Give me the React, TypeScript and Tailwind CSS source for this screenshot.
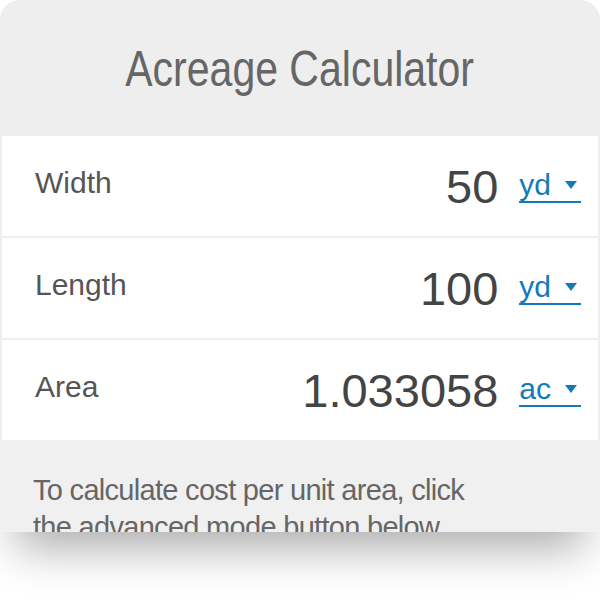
const rows = [
  { label: 'Width', value: '50', unit: 'yd' },
  { label: 'Length', value: '100', unit: 'yd' },
  { label: 'Area', value: '1.033058', unit: 'ac' },
];

export default function App() {
  return (
    <div className="h-[600px] w-[600px] overflow-hidden bg-white font-['Liberation_Sans',Arial,sans-serif]">
      <div className="h-[532px] overflow-hidden rounded-t-[20px] bg-[#eeeeee] shadow-[0_32px_46px_-16px_rgba(0,0,0,0.33)]">
        {/* Title */}
        <div className="flex h-[136px] items-center justify-center">
          <h1 className="mt-[2px] inline-block scale-x-[0.82] text-[50px] leading-none font-normal text-[#666666]">
            Acreage Calculator
          </h1>
        </div>

        {/* Inputs */}
        <div className="flex flex-col gap-[2px] px-[2px]">
          {rows.map((row) => (
            <div key={row.label} className="flex h-[100px] items-center bg-white pl-[33px] pr-[17px]">
              <span className="mb-[6px] flex-1 text-[30px] leading-none text-[#555555]">{row.label}</span>
              <span className="text-[47px] leading-none text-[#444444]">{row.value}</span>
              <span className="ml-[21px] inline-flex items-center border-b-2 border-[#1479b8] pb-[1px] pr-[4px] text-[30px] leading-none text-[#1479b8]">
                {row.unit}
                <span className="ml-[14px] h-0 w-0 border-x-[6px] border-t-[8px] border-x-transparent border-t-[#1479b8]" />
              </span>
            </div>
          ))}
        </div>

        {/* Note */}
        <div className="bg-[#f0f0f0] pt-[32px] pr-[110px] pl-[33px]">
          <p className="text-[29px] leading-[37px] tracking-[-0.7px] text-[#666666]">
            To calculate cost per unit area, click the advanced mode button below.
          </p>
        </div>
      </div>
    </div>
  );
}
